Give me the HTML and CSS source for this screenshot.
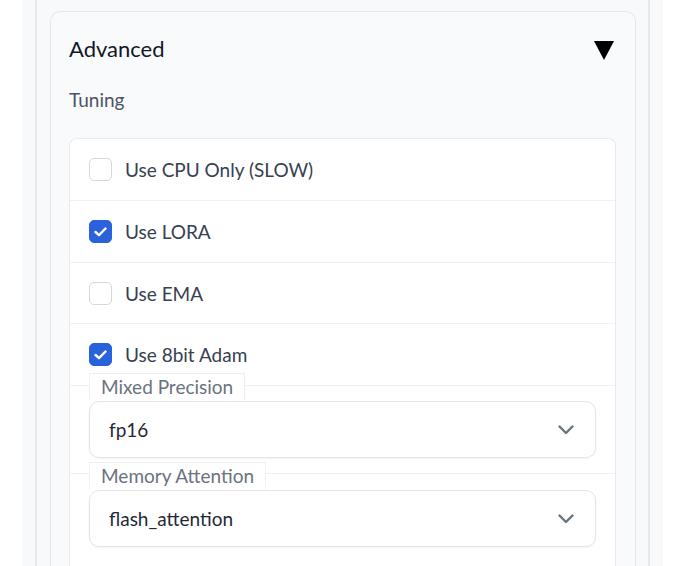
FILE: index.html
```html
<!DOCTYPE html>
<html lang="en">
<head>
    <meta charset="UTF-8">
    <meta name="viewport" content="width=device-width, initial-scale=1.0">
    <title>Advanced</title>
    <link rel="stylesheet" href="styles.css">
</head>
<body>

    <div class="panel">
        <div class="column">
            <div class="accordion">
                <div class="accordion-header">
                    <span class="accordion-title">Advanced</span>
                    <svg class="toggle" width="20" height="19" viewBox="0 0 20 19"><polygon points="0,0 20,0 10,19" fill="#000"/></svg>
                </div>
                <div class="group-title">Tuning</div>

                <div class="form">
                    <label class="check-row">
                        <span class="checkbox"></span>
                        <span class="check-label">Use CPU Only (SLOW)</span>
                    </label>
                    <label class="check-row">
                        <span class="checkbox checked">
                            <svg width="13" height="10" viewBox="0 0 13 10"><polyline points="1.5,5 5,8.2 11.5,1.5" fill="none" stroke="#fff" stroke-width="2.4" stroke-linecap="round" stroke-linejoin="round"/></svg>
                        </span>
                        <span class="check-label">Use LORA</span>
                    </label>
                    <label class="check-row short">
                        <span class="checkbox"></span>
                        <span class="check-label">Use EMA</span>
                    </label>
                    <label class="check-row">
                        <span class="checkbox checked">
                            <svg width="13" height="10" viewBox="0 0 13 10"><polyline points="1.5,5 5,8.2 11.5,1.5" fill="none" stroke="#fff" stroke-width="2.4" stroke-linecap="round" stroke-linejoin="round"/></svg>
                        </span>
                        <span class="check-label">Use 8bit Adam</span>
                    </label>

                    <div class="select-block">
                        <span class="block-label">Mixed Precision</span>
                        <div class="dropdown">
                            <span>fp16</span>
                            <svg width="16" height="10" viewBox="0 0 16 10"><polyline points="1.5,1.5 8,8 14.5,1.5" fill="none" stroke="#6b7280" stroke-width="2.4" stroke-linecap="round" stroke-linejoin="round"/></svg>
                        </div>
                    </div>

                    <div class="select-block last">
                        <span class="block-label">Memory Attention</span>
                        <div class="dropdown">
                            <span>flash_attention</span>
                            <svg width="16" height="10" viewBox="0 0 16 10"><polyline points="1.5,1.5 8,8 14.5,1.5" fill="none" stroke="#6b7280" stroke-width="2.4" stroke-linecap="round" stroke-linejoin="round"/></svg>
                        </div>
                    </div>
                </div>
            </div>
        </div>
    </div>

</body>
</html>
```

FILE: styles.css
```css
html, body {
    height: 100%;
}

body {
    font-family: Lato, "Noto Sans", sans-serif;
    background-color: #fff;
    margin: 0;
    padding: 0;
    overflow: hidden;
}

/* Panel de fondo */
.panel {
    margin-left: 22px;
    width: 615px;
    height: 100%;
    padding: 0 13px;
    background-color: #f8f9fb;
}

.column {
    height: 100%;
    box-sizing: border-box;
    border-left: 2px solid #e7e8ec;
    border-right: 2px solid #e7e8ec;
    padding: 11px 12px 0 13px;
}

/* Accordion */
.accordion {
    background-color: #f9fafb;
    border: 1px solid #e5e7eb;
    border-bottom: none;
    border-radius: 10px 10px 0 0;
    padding: 0 19px 0 18px;
    height: 100%;
    box-sizing: border-box;
    overflow: hidden;
}

.accordion-header {
    display: flex;
    justify-content: space-between;
    align-items: center;
    padding-top: 22px;
    height: 28px;
}

.accordion-title {
    font-size: 22px;
    color: #111827;
}

.toggle {
    margin-right: 2px;
    margin-top: 4px;
}

.group-title {
    font-size: 19px;
    color: #4b5563;
    margin-top: 25px;
    line-height: 26px;
}

/* Formulario */
.form {
    margin-top: 25px;
    background-color: #fff;
    border: 1px solid #e9ebee;
    border-bottom: none;
    border-radius: 8px 8px 0 0;
}

.check-row {
    display: flex;
    align-items: center;
    gap: 13px;
    height: 61px;
    padding-left: 19px;
    border-bottom: 1px solid #f0f1f4;
}

.check-row.short {
    height: 60px;
}

.checkbox {
    width: 21px;
    height: 21px;
    border: 1px solid #d4d7dc;
    border-radius: 5px;
    background-color: #fff;
    display: flex;
    align-items: center;
    justify-content: center;
}

.checkbox.checked {
    background-color: #2a62db;
    border-color: #2a62db;
}

.check-label {
    font-size: 19px;
    color: #374151;
}

.select-block {
    display: flex;
    flex-direction: column;
    padding: 0 19px 15px 19px;
    border-bottom: 1px solid #f0f1f4;
}

.select-block.last {
    border-bottom: none;
    padding-bottom: 30px;
}

.block-label {
    align-self: flex-start;
    margin-top: -13px;
    height: 26px;
    line-height: 26px;
    padding: 0 11px;
    font-size: 19px;
    color: #6b7280;
    background-color: #fff;
    border: 1px solid #eceef1;
    border-bottom: none;
    position: relative;
}

.select-block.last .block-label {
    margin-top: -12px;
}

.dropdown {
    margin-top: 1px;
    height: 55px;
    display: flex;
    align-items: center;
    justify-content: space-between;
    padding: 0 21px 0 19px;
    border: 1px solid #e3e5e9;
    border-radius: 10px;
    box-shadow: 0 1px 2px rgba(0, 0, 0, 0.05);
    font-size: 19px;
    color: #1f2937;
}
```
